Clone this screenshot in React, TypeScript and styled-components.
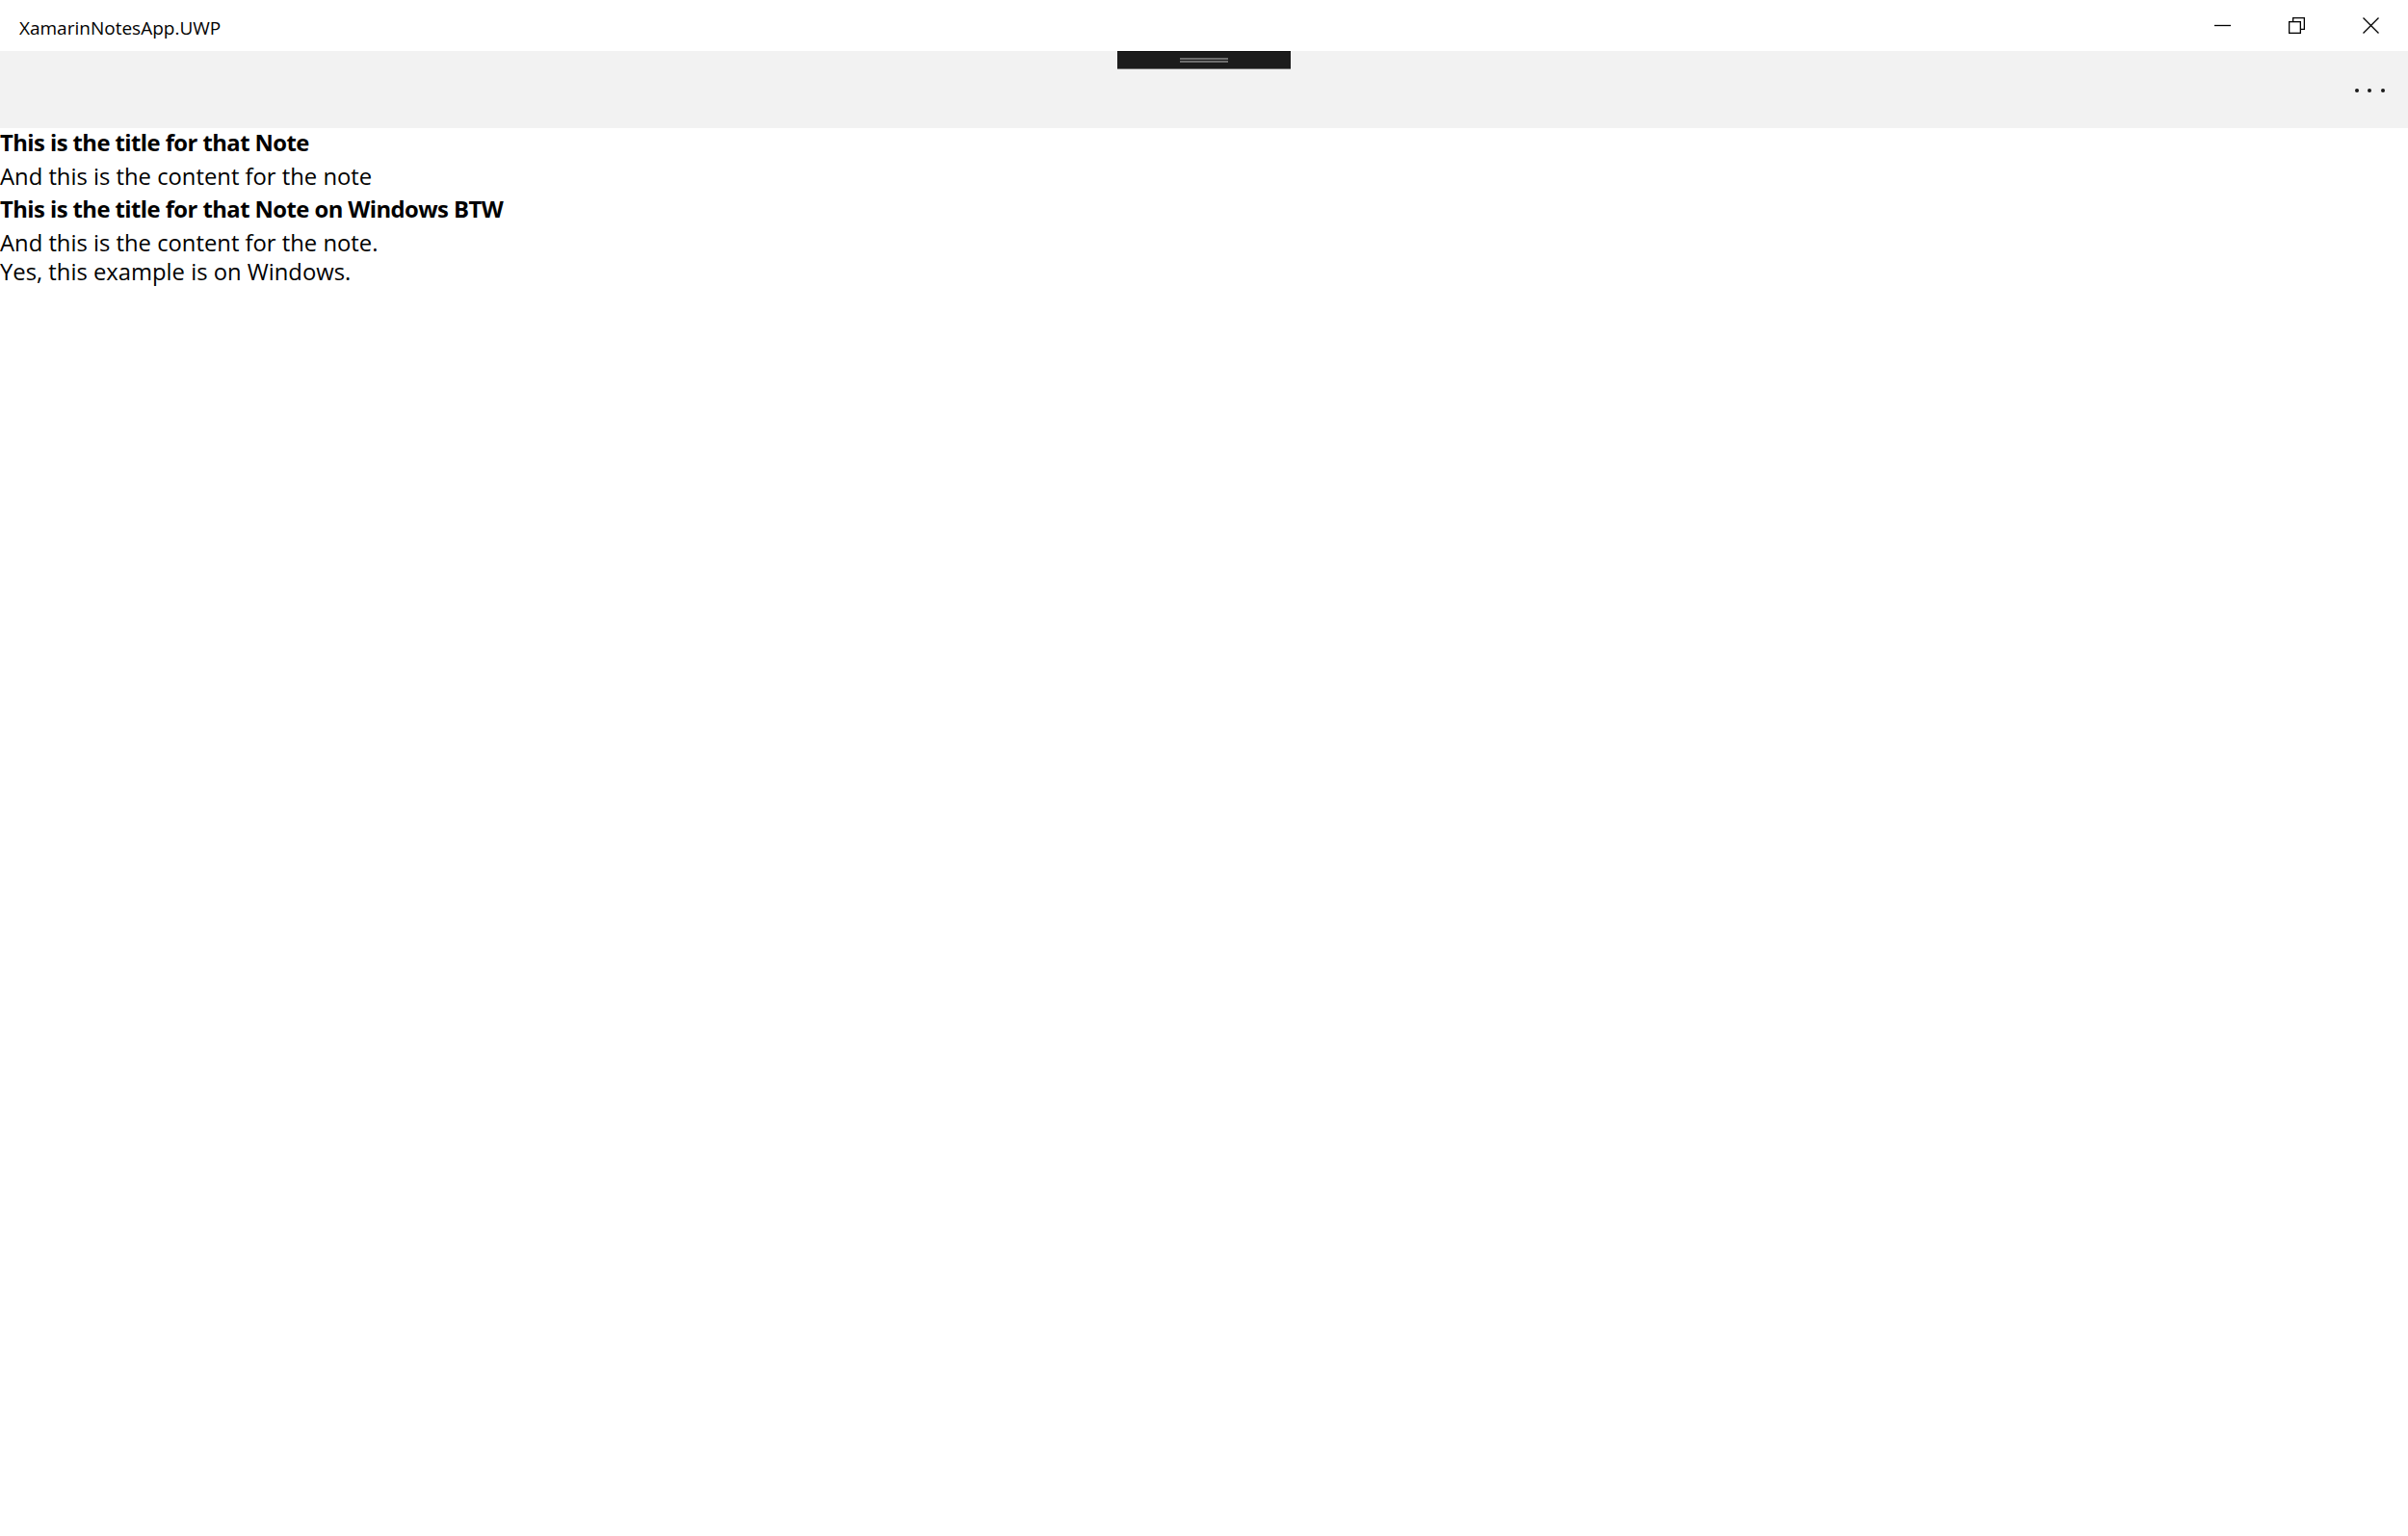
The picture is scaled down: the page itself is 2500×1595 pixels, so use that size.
import React from "react";
import styled, { createGlobalStyle } from "styled-components";

//////////////////////////////////////////////////////////////////////////////

const GlobalStyle = createGlobalStyle`
  html, body {
    margin: 0;
    padding: 0;
    background-color: #ffffff;
    font-family: "Open Sans", "Noto Sans", sans-serif;
    color: #000000;
  }
`;

const SWindow = styled.div`
  display: flex;
  flex-direction: column;
  width: 100%;
  min-height: 100vh;
  background-color: #ffffff;
`;

const STitleBar = styled.div`
  display: flex;
  justify-content: space-between;
  align-items: stretch;
  height: 53px;
  background-color: #ffffff;
`;

const SAppName = styled.div`
  padding: 16px 0 0 20px;
  font-size: 19px;
  line-height: 26px;
  color: #000000;
`;

const SCaptionButtons = styled.div`
  display: flex;
`;

const SCaptionButton = styled.div`
  display: flex;
  justify-content: center;
  align-items: center;
  width: 77px;
  height: 53px;
`;

const SToolbar = styled.div`
  position: relative;
  display: flex;
  justify-content: flex-end;
  height: 80px;
  background-color: #f2f2f2;
`;

const SHandle = styled.div`
  position: absolute;
  top: 0;
  left: 50%;
  transform: translateX(-50%);
  box-sizing: border-box;
  width: 180px;
  height: 19px;
  background-color: #1c1c1c;
  border-top: 1px solid #0e0e0e;
  border-bottom: 1px solid #727272;
  display: flex;
  flex-direction: column;
  align-items: center;
  gap: 1.5px;
  padding-top: 6px;
`;

const SGripLine = styled.span`
  display: block;
  width: 50px;
  height: 1.5px;
  background-color: #6e6e6e;
`;

const SMoreButton = styled.div`
  display: flex;
  justify-content: center;
  align-items: flex-start;
  gap: 9.5px;
  width: 80px;
  padding-top: 39px;
  box-sizing: border-box;
`;

const SDot = styled.span`
  display: block;
  width: 4px;
  height: 4px;
  border-radius: 50%;
  background-color: #1a1a1a;
`;

const SNoteList = styled.div`
  display: flex;
  flex-direction: column;
  gap: 4px;
`;

const SNoteCell = styled.div`
  display: flex;
  flex-direction: column;
  gap: 5px;
`;

const STitle = styled.div`
  font-size: 23.8px;
  font-weight: 700;
  line-height: 30px;
  letter-spacing: -0.55px;
`;

const SContent = styled.div`
  font-size: 23.8px;
  font-weight: 400;
  line-height: 30px;
  white-space: pre-line;
`;

////////////////////////////////////////////////////////////////////////////

const notes = [
  {
    title: "This is the title for that Note",
    content: "And this is the content for the note",
  },
  {
    title: "This is the title for that Note on Windows BTW",
    content: "And this is the content for the note.\nYes, this example is on Windows.",
  },
];

const MinimizeIcon = () => (
  <svg width="17" height="17" viewBox="0 0 17 17">
    <line x1="0" y1="8.5" x2="17" y2="8.5" stroke="#000" strokeWidth="1.3" />
  </svg>
);

const RestoreIcon = () => (
  <svg width="17" height="17" viewBox="0 0 17 17" fill="none">
    <rect x="0.65" y="4.65" width="11.7" height="11.7" stroke="#000" strokeWidth="1.3" />
    <path d="M4.65 4.65 V0.65 H16.35 V12.35 H12.35" stroke="#000" strokeWidth="1.3" />
  </svg>
);

const CloseIcon = () => (
  <svg width="17" height="17" viewBox="0 0 17 17">
    <path d="M0.5 0.5 L16.5 16.5 M16.5 0.5 L0.5 16.5" stroke="#000" strokeWidth="1.3" />
  </svg>
);

const App = () => {
  return (
    <>
      <GlobalStyle />
      <SWindow>
        <STitleBar>
          <SAppName>XamarinNotesApp.UWP</SAppName>
          <SCaptionButtons>
            <SCaptionButton>
              <MinimizeIcon />
            </SCaptionButton>
            <SCaptionButton>
              <RestoreIcon />
            </SCaptionButton>
            <SCaptionButton>
              <CloseIcon />
            </SCaptionButton>
          </SCaptionButtons>
        </STitleBar>

        <SToolbar>
          <SHandle>
            <SGripLine />
            <SGripLine />
          </SHandle>
          <SMoreButton>
            <SDot />
            <SDot />
            <SDot />
          </SMoreButton>
        </SToolbar>

        <SNoteList>
          {notes.map((note) => (
            <SNoteCell key={note.title}>
              <STitle>{note.title}</STitle>
              <SContent>{note.content}</SContent>
            </SNoteCell>
          ))}
        </SNoteList>
      </SWindow>
    </>
  );
};

export default App;
